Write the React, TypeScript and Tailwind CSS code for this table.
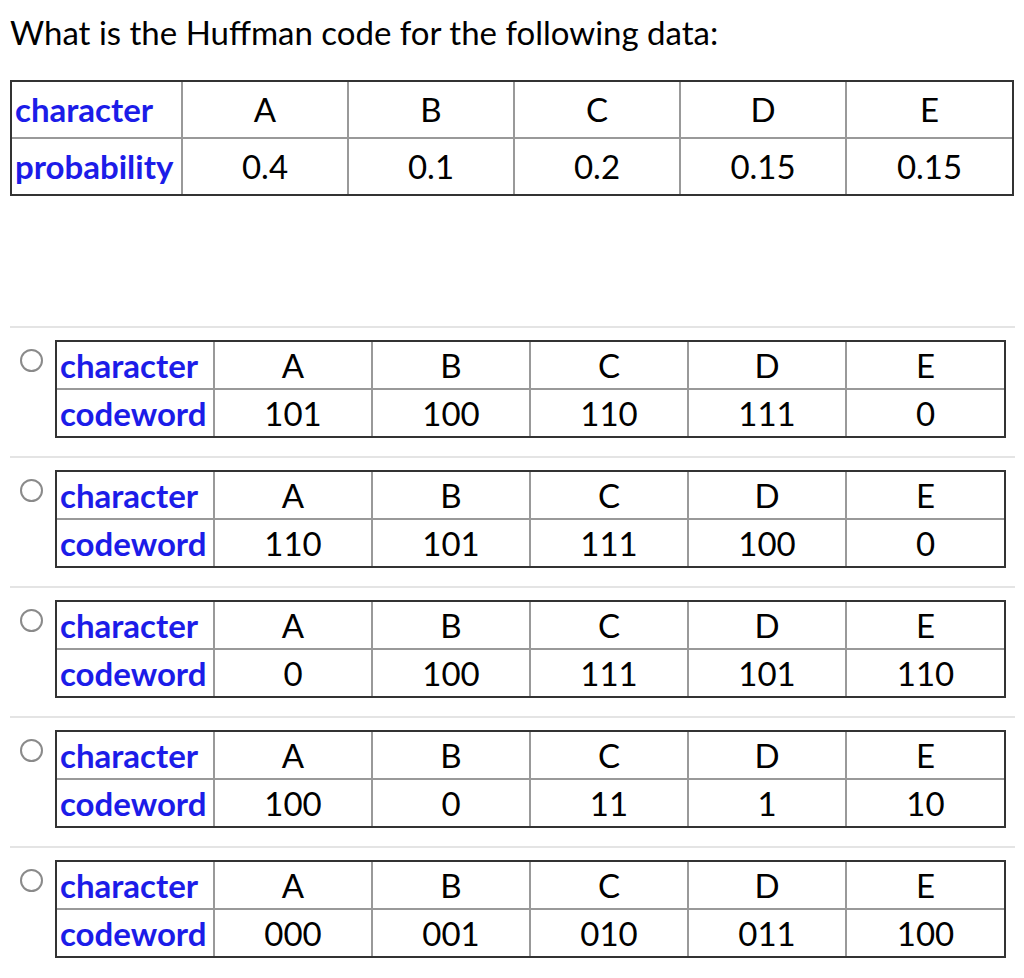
import React from "react";

const letters = ["A", "B", "C", "D", "E"];

const options = [
  ["101", "100", "110", "111", "0"],
  ["110", "101", "111", "100", "0"],
  ["0", "100", "111", "101", "110"],
  ["100", "0", "11", "1", "10"],
  ["000", "001", "010", "011", "100"],
];

const DataTable = ({
  label,
  values,
  labelWidth,
  colWidth,
}: {
  label: string;
  values: string[];
  labelWidth: number;
  colWidth: number;
}) => (
  <div className="inline-block border-2 border-[#333]">
    <table className="table-fixed border-collapse border-hidden">
      <colgroup>
        <col style={{ width: labelWidth }} />
        {letters.map((l) => (
          <col key={l} style={{ width: colWidth }} />
        ))}
      </colgroup>
      <tbody>
        {[
          ["character", letters],
          [label, values],
        ].map(([head, cells]) => (
          <tr key={head as string}>
            <td className="border-2 border-[#999] pl-[3px] text-left font-bold text-[#1c1ce8]">
              {head as string}
            </td>
            {(cells as string[]).map((c, i) => (
              <td key={i} className="border-2 border-[#999] text-center text-black">
                {c}
              </td>
            ))}
          </tr>
        ))}
      </tbody>
    </table>
  </div>
);

export default function App() {
  return (
    <div className="min-h-screen w-[1024px] bg-white pl-[10px] font-['Lato',sans-serif]">
      <h1 className="pt-[10px] text-[33px] leading-[44px] font-normal text-black">
        What is the Huffman code for the following data:
      </h1>

      <div className="mt-[26px] flex text-[33px] leading-[55px]">
        <DataTable
          label="probability"
          values={["0.4", "0.1", "0.2", "0.15", "0.15"]}
          labelWidth={170}
          colWidth={166}
        />
      </div>

      <div className="mt-[130px] w-[1005px]">
        {options.map((vals, i) => (
          <div
            key={i}
            className="flex items-start border-t-2 border-[#e4e4e4] pt-[12px] pb-[18px]"
          >
            <div className="ml-[10px] mt-[9px] h-[23px] w-[23px] shrink-0 rounded-full border-2 border-[#8a8a8a]" />
            <div className="ml-[12px] flex text-[33px] leading-[46px]">
              <DataTable label="codeword" values={vals} labelWidth={157} colWidth={158} />
            </div>
          </div>
        ))}
      </div>
    </div>
  );
}
